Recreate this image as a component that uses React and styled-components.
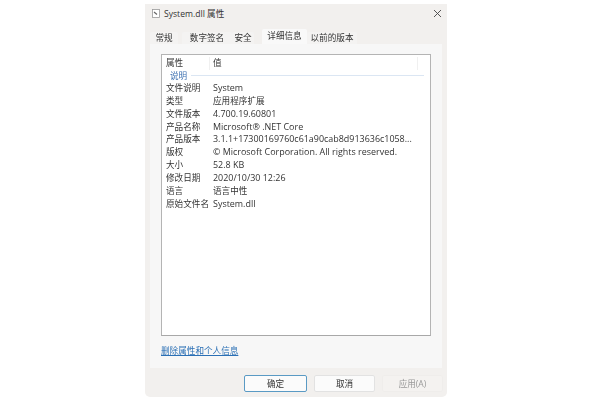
import styled, { createGlobalStyle } from "styled-components";

const Global = createGlobalStyle`
  html, body { margin: 0; padding: 0; background: #fff; }
  body { width: 600px; height: 400px; overflow: hidden; font-family: "Open Sans", "Noto Sans CJK SC", sans-serif; }
`;

const rows = [
  ["文件说明", "System", true],
  ["类型", "应用程序扩展"],
  ["文件版本", "4.700.19.60801", true],
  ["产品名称", "Microsoft® .NET Core", true],
  ["产品版本", "3.1.1+17300169760c61a90cab8d913636c1058...", true],
  ["版权", "© Microsoft Corporation. All rights reserved.", true],
  ["大小", "52.8 KB", true],
  ["修改日期", "2020/10/30 12:26", true],
  ["语言", "语言中性"],
  ["原始文件名", "System.dll", true],
];

const tabs = [
  { label: "常规", width: 28, gap: 0 },
  { label: "数字签名", width: 50, gap: 4 },
  { label: "安全", width: 22, gap: 0 },
  { label: "详细信息", width: 45, gap: 8, active: true },
  { label: "以前的版本", width: 50, gap: 0 },
];

const Page = styled.div`
  width: 600px;
  height: 400px;
  padding: 4px 0 0 145px;
  box-sizing: border-box;
`;
const Dialog = styled.div`
  width: 302px;
  height: 393px;
  background: #f2f0ee;
  border-radius: 0 0 5px 5px;
  display: flex;
  flex-direction: column;
  color: #333;
  font-size: 8.6px;
  filter: blur(0.45px);
`;
const TitleBar = styled.div`
  height: 18px;
  display: flex;
  align-items: center;
  padding: 0 5px 0 7px;
  gap: 4px;
`;
const Title = styled.span`
  flex: 1;
`;
const Tabs = styled.div`
  height: 22px;
  display: flex;
  align-items: flex-end;
  padding-left: 5px;
`;
const Tab = styled.div`
  height: ${(p) => (p.$active ? "15px" : "12px")};
  width: ${(p) => p.$w}px;
  margin-left: ${(p) => p.$gap}px;
  display: flex;
  align-items: center;
  justify-content: center;
  box-sizing: border-box;
  padding-bottom: ${(p) => (p.$active ? "2px" : "1px")};
  background: ${(p) => (p.$active ? "#f9f9f9" : "#f4f3f2")};
  border-radius: 2px 2px 0 0;
`;
const Panel = styled.div`
  height: 324px;
  margin: 0 5px;
  box-sizing: border-box;
  background: #f7f7f7;
  padding: 10px 11px 0;
  display: flex;
  flex-direction: column;
`;
const List = styled.div`
  height: 282px;
  box-sizing: border-box;
  background: #fff;
  border: 1px solid #b4b4b4;
  border-bottom-color: #a8a8a8;
  padding: 2px 6px 0 4px;
`;
const Row = styled.div`
  display: grid;
  grid-template-columns: 47px 1fr;
  height: 12.85px;
  line-height: 12.85px;
  white-space: nowrap;
`;
const Value = styled.span`
  font-size: ${(p) => (p.$latin ? "8.95px" : "8.6px")};
`;
const Header = styled(Row)`
  height: 13px;
  line-height: 13px;
  margin-right: 6px;
  border-right: 1px solid #f0f0f0;
`;
const HeaderCell = styled.span`
  &:first-child {
    border-right: 1px solid #f0f0f0;
    margin-right: 3px;
  }
`;
const Group = styled.div`
  display: flex;
  align-items: center;
  gap: 4px;
  height: 11px;
  margin: 0 0 1px 4px;
  color: #3b6fb0;
`;
const GroupLine = styled.div`
  flex: 1;
  height: 1px;
  background: #dbe6f3;
`;
const LinkText = styled.a`
  margin-top: 8px;
  color: #2a6fb5;
  text-decoration: underline;
`;
const Footer = styled.div`
  flex: 1;
  display: flex;
  justify-content: flex-end;
  align-items: flex-start;
  gap: 7px;
  padding: 7px 4px 0 0;
`;
const Button = styled.div`
  width: ${(p) => p.$w}px;
  height: 17px;
  box-sizing: border-box;
  display: flex;
  align-items: center;
  justify-content: center;
  border-radius: 2px;
  background: ${(p) => (p.$disabled ? "#f4f2f0" : "#fbfbfb")};
  border: 1px solid ${(p) => (p.$primary ? "#5a9ac4" : p.$disabled ? "#efedeb" : "#e2e2e2")};
  color: ${(p) => (p.$disabled ? "#999" : "#333")};
`;
const Close = styled.svg`
  width: 9px;
  height: 9px;
`;
const FileIcon = styled.svg`
  width: 8px;
  height: 9px;
`;

const App = () => {
  return (
    <>
      <Global />
      <Page>
        <Dialog>
          <TitleBar>
            <FileIcon viewBox="0 0 8 9">
              <rect x="0.5" y="0.5" width="7" height="8" fill="#fff" stroke="#999" strokeWidth="0.8" />
              <path d="M2 3l3 2.5" stroke="#666" strokeWidth="1.2" />
            </FileIcon>
            <Title>System.dll 属性</Title>
            <Close viewBox="0 0 9 9">
              <path d="M1 1l7 7M8 1l-7 7" stroke="#444" strokeWidth="0.9" fill="none" />
            </Close>
          </TitleBar>
          <Tabs>
            {tabs.map((t) => (
              <Tab key={t.label} $active={t.active} $w={t.width} $gap={t.gap}>
                {t.label}
              </Tab>
            ))}
          </Tabs>
          <Panel>
            <List>
              <Header>
                <HeaderCell>属性</HeaderCell>
                <HeaderCell>值</HeaderCell>
              </Header>
              <Group>
                说明
                <GroupLine />
              </Group>
              {rows.map(([k, v, latin]) => (
                <Row key={k}>
                  <span>{k}</span>
                  <Value $latin={latin}>{v}</Value>
                </Row>
              ))}
            </List>
            <LinkText>删除属性和个人信息</LinkText>
          </Panel>
          <Footer>
            <Button $w={63} $primary>确定</Button>
            <Button $w={61}>取消</Button>
            <Button $w={61} $disabled>应用(A)</Button>
          </Footer>
        </Dialog>
      </Page>
    </>
  );
};

export default App;
